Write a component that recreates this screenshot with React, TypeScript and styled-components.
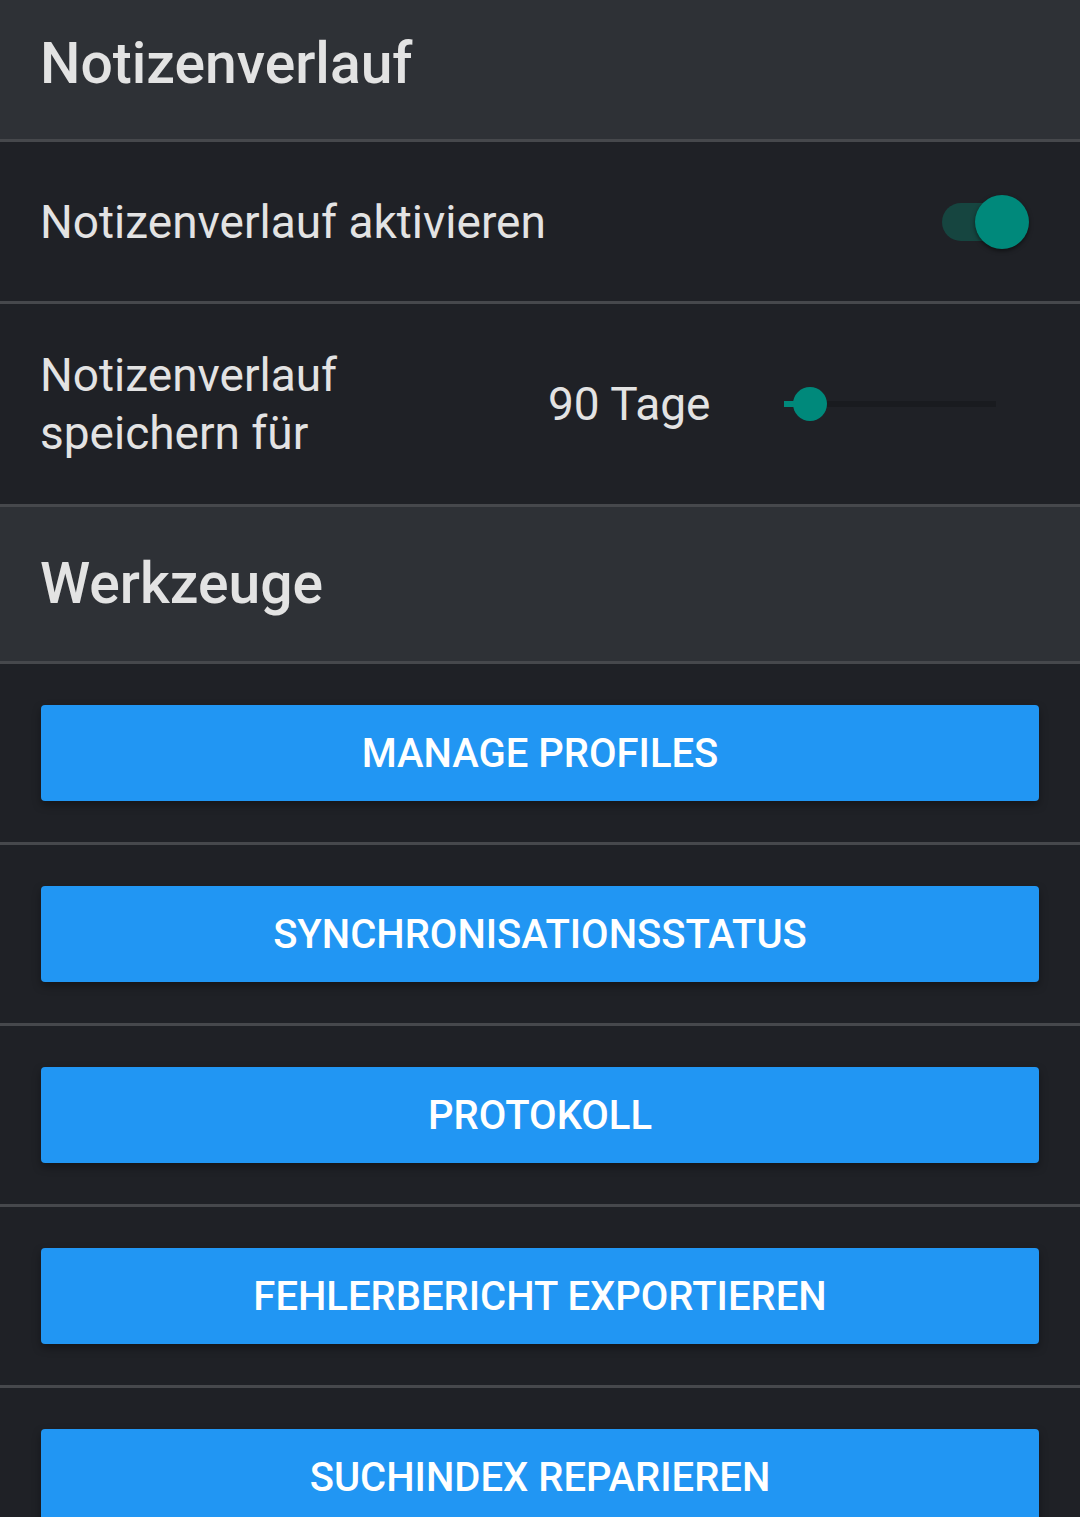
import React from "react";
import styled, { createGlobalStyle } from "styled-components";

const Global = createGlobalStyle`
  html, body { margin: 0; padding: 0; background: #1f2126; }
  body { font-family: Roboto, "Noto Sans", sans-serif; }
`;

const Page = styled.div`
  width: 1080px;
  min-height: 1517px;
  background: #1f2126;
  display: flex;
  flex-direction: column;
`;

const SectionHeader = styled.div<{ $h: number; $shift: number }>`
  height: ${(p) => p.$h}px;
  background: #2e3136;
  border-bottom: 3px solid #46484c;
  display: flex;
  align-items: center;
  padding: 0 40px ${(p) => p.$shift}px 40px;
  box-sizing: border-box;
  color: #e3e3e3;
  font-size: 57px;
  font-weight: 500;
`;

const Row = styled.div<{ $h: number }>`
  height: ${(p) => p.$h}px;
  border-bottom: 3px solid #46484c;
  display: flex;
  align-items: center;
  padding: 0 41px 0 40px;
  box-sizing: border-box;
  color: #e3e3e3;
  font-size: 46px;
`;

const Label = styled.div`
  flex: 1;
  line-height: 58px;
`;

const Value = styled.div`
  width: 236px;
  color: #e3e3e3;
  font-size: 46px;
`;

const Toggle = styled.div`
  position: relative;
  width: 87px;
  height: 54px;
  margin-right: 10px;
  display: flex;
  align-items: center;
`;

const Track = styled.div`
  width: 60px;
  height: 38px;
  border-radius: 19px;
  background: #164540;
`;

const Thumb = styled.div`
  position: absolute;
  right: 0;
  top: 0;
  width: 54px;
  height: 54px;
  border-radius: 50%;
  background: #00897b;
  box-shadow: 0 2px 4px rgba(0, 0, 0, 0.5);
`;

const Slider = styled.div`
  position: relative;
  width: 212px;
  height: 36px;
  margin-right: 43px;
  display: flex;
  align-items: center;
`;

const SliderRail = styled.div`
  width: 100%;
  height: 6px;
  background: #191b1f;
`;

const SliderFill = styled.div`
  position: absolute;
  left: 0;
  top: 15px;
  height: 6px;
  background: #00897b;
`;

const SliderThumb = styled.div`
  position: absolute;
  top: 1px;
  width: 34px;
  height: 34px;
  margin-left: -17px;
  border-radius: 50%;
  background: #00897b;
`;

const ButtonRow = styled.div<{ $last?: boolean }>`
  height: 181px;
  box-sizing: border-box;
  padding: 41px 41px 0 41px;
  border-bottom: ${(p) => (p.$last ? "none" : "3px solid #46484c")};
`;

const Button = styled.button`
  width: 100%;
  height: 96px;
  border: none;
  border-radius: 4px;
  background: #2196f3;
  color: #ffffff;
  font-family: Roboto, "Noto Sans", sans-serif;
  font-size: 40px;
  font-weight: 500;
  box-shadow: 0 4px 8px rgba(0, 0, 0, 0.35);
  text-transform: uppercase;
`;

const buttons = [
  "Manage profiles",
  "Synchronisationsstatus",
  "Protokoll",
  "Fehlerbericht exportieren",
  "Suchindex reparieren",
];

export default function App() {
  const sliderPos = 26;
  return (
    <Page>
      <Global />
      <SectionHeader $h={142} $shift={12}>
        Notizenverlauf
      </SectionHeader>
      <Row $h={162}>
        <Label>Notizenverlauf aktivieren</Label>
        <Toggle>
          <Track />
          <Thumb />
        </Toggle>
      </Row>
      <Row $h={203}>
        <Label>
          Notizenverlauf
          <br />
          speichern für
        </Label>
        <Value>90 Tage</Value>
        <Slider>
          <SliderRail />
          <SliderFill style={{ width: sliderPos }} />
          <SliderThumb style={{ left: sliderPos }} />
        </Slider>
      </Row>
      <SectionHeader $h={157} $shift={2}>
        Werkzeuge
      </SectionHeader>
      {buttons.map((b, i) => (
        <ButtonRow key={b} $last={i === buttons.length - 1}>
          <Button>{b}</Button>
        </ButtonRow>
      ))}
    </Page>
  );
}
